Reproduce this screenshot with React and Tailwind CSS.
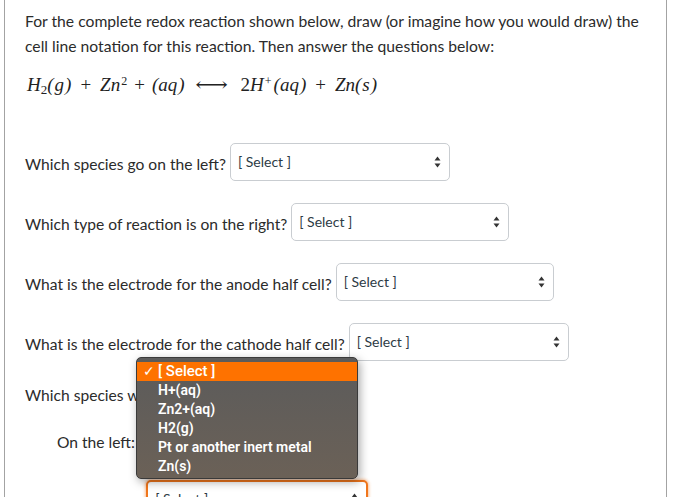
import React from "react";

const lato = { fontFamily: "Lato, 'Open Sans', sans-serif" };

const Arrows = () => (
  <svg width="7" height="12" viewBox="0 0 7 12" className="shrink-0">
    <path d="M3.5 0.5 L6.5 4.5 L0.5 4.5 Z" fill="#333" />
    <path d="M3.5 11.5 L6.5 7.5 L0.5 7.5 Z" fill="#333" />
  </svg>
);

const SelectBox = ({ width = "w-[220px]", focused = false }) => (
  <div
    className={`${width} h-[38px] shrink-0 rounded-[5px] bg-white flex items-center justify-between pl-[7px] pr-[8px] ${
      focused
        ? "border-2 border-[#f0761c] shadow-[0_0_3px_1px_rgba(240,118,28,0.45)]"
        : "border border-[#c9cdd1]"
    }`}
  >
    <span className="text-[14px] text-[#2d3b45] -mt-[1px]">[ Select ]</span>
    <Arrows />
  </div>
);

const Row = ({ label, width }) => (
  <div className="flex items-center gap-[4px] h-[38px]">
    <span className="text-[15.6px] pt-[6px] whitespace-nowrap">{label}</span>
    <SelectBox width={width} />
  </div>
);

const Op = ({ children, className = "mx-[9px]" }) => (
  <span className={`not-italic ${className}`}>{children}</span>
);

const options = ["H+(aq)", "Zn2+(aq)", "H2(g)", "Pt or another inert metal", "Zn(s)"];

export default function App() {
  return (
    <div className="bg-white w-[682px] h-[497px] overflow-hidden relative" style={lato}>
      <div className="ml-[4px] w-[663px] min-h-[560px] border-x border-[#a3a3a3] pl-[20px] pr-[6px] pt-[9px] text-[#2b2b2b]">
        <p className="text-[15.7px] leading-[25px]">
          For the complete redox reaction shown below, draw (or imagine how you would draw) the cell line
          notation for this reaction. Then answer the questions below:
        </p>

        <div
          className="mt-[13px] pl-[2px] text-[19px] leading-[26px] italic whitespace-nowrap text-[#222]"
          style={{ fontFamily: "'Liberation Serif', 'DejaVu Serif', serif" }}
        >
          H<sub className="not-italic text-[13px]">2</sub>(<span className="mx-[1px]">g</span>)
          <Op className="mx-[9px]">+</Op>
          Zn<sup className="not-italic text-[12px] ml-[1px]">2</sup>
          <Op className="mx-[7px]">+</Op>(a<span className="mr-[1px]">q</span>)
          <span className="not-italic inline-block w-[39px] ml-[7px] mr-[10px] text-center scale-x-[1.2]">⟷</span>
          <span className="not-italic">2</span>H<sup className="not-italic text-[12px] ml-[1px] mr-[2px]">+</sup>(a
          <span className="mr-[1px]">q</span>)<Op className="mx-[9px]">+</Op>Zn(<span className="mx-[1px]">s</span>)
        </div>

        <div className="mt-[45px] flex flex-col gap-[22px]">
          <Row label="Which species go on the left?" width="w-[220px]" />
          <Row label="Which type of reaction is on the right?" width="w-[218px]" />
          <Row label="What is the electrode for the anode half cell?" width="w-[218px]" />
          <Row label="What is the electrode for the cathode half cell?" width="w-[220px]" />
        </div>

        <p className="mt-[22px] text-[15.6px] leading-[24px] whitespace-nowrap">
          Which species will be in the cell on each side?
        </p>

        <div className="mt-[15px] ml-[32px] flex flex-col gap-[20px]">
          <div className="flex items-center gap-[13px] h-[38px]">
            <span className="text-[15.6px] pt-[4px] whitespace-nowrap">On the left:</span>
            <SelectBox width="w-[210px]" />
          </div>
          <div className="flex items-center gap-[2px] h-[38px]">
            <span className="text-[15.6px] pt-[8px] whitespace-nowrap">On the right:</span>
            <SelectBox width="w-[222px]" focused />
          </div>
        </div>
      </div>

      {/* open dropdown menu */}
      <div
        className="absolute left-[136px] top-[357px] w-[222px] h-[122px] rounded-[5px] border border-[#3a3a3a] bg-gradient-to-b from-[#5b5b5b] to-[#6b6157] py-[4px] shadow-[2px_3px_10px_rgba(0,0,0,0.35)]"
        style={{ fontFamily: "Roboto, 'Liberation Sans', sans-serif" }}
      >
        <div className="h-[19px] bg-[#fe7200] flex items-center text-white text-[15px] font-medium">
          <span className="w-[21px] pl-[6px] text-[14px]">✓</span>
          <span>[ Select ]</span>
        </div>
        {options.map((o) => (
          <div key={o} className="h-[19px] flex items-center pl-[21px] text-white text-[14px] font-semibold">
            {o}
          </div>
        ))}
      </div>
    </div>
  );
}
